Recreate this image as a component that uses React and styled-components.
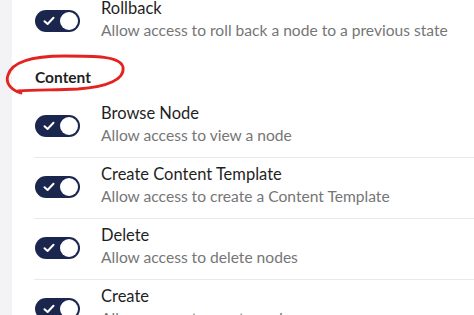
import React from "react";
import styled, { createGlobalStyle } from "styled-components";

const GlobalStyle = createGlobalStyle`
  body {
    margin: 0;
    background: #ffffff;
    font-family: Lato, "Open Sans", sans-serif;
    overflow: hidden;
  }
`;

const navy = "#1b264f";

const Page = styled.div`
  display: flex;
  width: 474px;
  height: 315px;
  overflow: hidden;
`;

const Strip = styled.div`
  width: 12px;
  flex-shrink: 0;
  background: #f3f3f5;
`;

const Panel = styled.div`
  flex: 1;
  padding-left: 22px;
  margin-top: -9px;
  position: relative;
`;

const Row = styled.div`
  display: flex;
  align-items: flex-start;
  gap: 21px;
  padding: 5px 0 11px;
  border-top: 1px solid ${props => (props.first ? "transparent" : "#e9e9eb")};
`;

const Toggle = styled.div`
  position: relative;
  width: 45px;
  height: 22px;
  margin-top: 13px;
  margin-left: 1px;
  border-radius: 11px;
  background: ${navy};
  flex-shrink: 0;

  > svg {
    position: absolute;
    left: 8px;
    top: 6px;
  }
`;

const Knob = styled.span`
  position: absolute;
  right: 2px;
  top: 2px;
  width: 18px;
  height: 18px;
  border-radius: 50%;
  background: #ffffff;
`;

const Text = styled.div`
  display: flex;
  flex-direction: column;
  white-space: nowrap;
`;

const Title = styled.div`
  font-size: 16.5px;
  line-height: 22px;
  color: #1f1f1f;
`;

const Desc = styled.div`
  font-size: 15.6px;
  line-height: 22px;
  color: #767676;
`;

const Heading = styled.div`
  position: relative;
  margin: 14px 0 8px 1px;
  font-size: 15.5px;
  line-height: 22px;
  font-weight: 700;
  color: #1f1f1f;

  > svg {
    position: absolute;
    left: -31px;
    top: -14px;
    overflow: visible;
  }
`;

const Circle = () => (
  <svg width="124" height="44" viewBox="0 0 124 44">
    <g transform="translate(-4,-52)">
      <path
        d="M 21 93 C 11 90, 5 83, 8 75 C 12 62, 32 56, 64 56 C 95 56, 120 56, 123 67 C 125 79, 108 87, 78 89 C 55 90, 36 90, 18 91"
        fill="none"
        stroke="#e3231f"
        strokeWidth="2.8"
        strokeLinecap="round"
      />
    </g>
  </svg>
);

const Switch = () => (
  <Toggle>
    <svg width="12" height="10" viewBox="0 0 12 10">
      <path
        d="M1.5 5.2 L4.6 8 L10.5 1.8"
        fill="none"
        stroke="#ffffff"
        strokeWidth="2"
        strokeLinecap="round"
        strokeLinejoin="round"
      />
    </svg>
    <Knob />
  </Toggle>
);

const Permission = ({ title, desc, first }) => (
  <Row first={first}>
    <Switch />
    <Text>
      <Title>{title}</Title>
      <Desc>{desc}</Desc>
    </Text>
  </Row>
);

const contentPermissions = [
  { title: "Browse Node", desc: "Allow access to view a node" },
  { title: "Create Content Template", desc: "Allow access to create a Content Template" },
  { title: "Delete", desc: "Allow access to delete nodes" },
  { title: "Create", desc: "Allow access to create nodes" },
];

const App = () => {
  return (
    <Page>
      <GlobalStyle />
      <Strip />
      <Panel>
        <Permission
          first
          title="Rollback"
          desc="Allow access to roll back a node to a previous state"
        />
        <Heading>
          Content
          <Circle />
        </Heading>
        {contentPermissions.map((p, index) => (
          <Permission key={index} first={index === 0} title={p.title} desc={p.desc} />
        ))}
      </Panel>
    </Page>
  );
};

export default App;
